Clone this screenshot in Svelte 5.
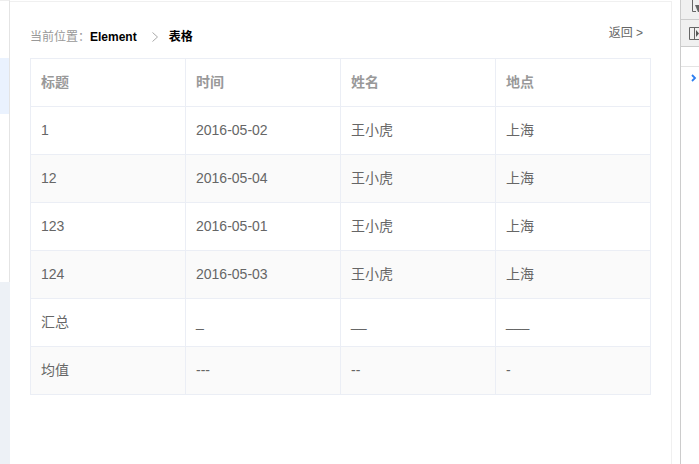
<script>
  const rows = [
    ['1', '2016-05-02', '王小虎', '上海'],
    ['12', '2016-05-04', '王小虎', '上海'],
    ['123', '2016-05-01', '王小虎', '上海'],
    ['124', '2016-05-03', '王小虎', '上海'],
    ['汇总', '_', '__', '___'],
    ['均值', '---', '--', '-']
  ];
</script>

<div class="page">
  <aside class="side">
    <div class="side-top"></div>
    <div class="side-active"></div>
    <div class="side-fill"></div>
    <div class="side-rest"></div>
  </aside>
  <main class="panel">
    <div class="crumbs">
      <div class="trail">
        <span class="label">当前位置：</span>
        <span class="strong">Element</span>
        <svg class="sep" width="8" height="12" viewBox="0 0 8 12"><path d="M1.500 1.500 L6.500 6 L1.500 10.500" fill="none" stroke="#aaa" stroke-width="1"/></svg>
        <span class="strong">表格</span>
      </div>
      <span class="back">返回 &gt;</span>
    </div>
    <table>
      <colgroup><col class="c" /><col class="c" /><col class="c" /><col class="c" /></colgroup>
      <thead>
        <tr><th>标题</th><th>时间</th><th>姓名</th><th>地点</th></tr>
      </thead>
      <tbody>
        {#each rows as row, i}
          <tr class:odd={i % 2 === 1}>
            {#each row as cell}<td>{cell}</td>{/each}
          </tr>
        {/each}
      </tbody>
    </table>
  </main>
  <div class="gutter"></div>
  <aside class="tools">
    <div class="tool t1">
      <svg width="8" height="13" viewBox="0 0 8 13"><path d="M.5 0 V11.500 H4" fill="none" stroke="#666"/><path d="M3 5 H8 V12 H6 Z" fill="#666"/></svg>
    </div>
    <div class="tool t2">
      <svg width="10" height="13" viewBox="0 0 10 13"><path d="M10 .5 H.5 V12.500 H10 M5.500 .5 V12.500" fill="none" stroke="#666"/><path d="M7 3 L10 6.500 L7 10 Z" fill="#555"/></svg>
    </div>
    <div class="tool-blank"></div>
    <div class="tool-chev">
      <svg width="6" height="8" viewBox="0 0 6 8"><path d="M1 1 L4 4 L1 7" fill="none" stroke="#2d7ff0" stroke-width="1.800"/></svg>
    </div>
  </aside>
</div>

<style>
  :global(body) {
    margin: 0;
    background: #fff;
  }
  .page {
    display: flex;
    width: 699px;
    height: 464px;
    overflow: hidden;
    font-family: "Liberation Sans", "Noto Sans CJK SC", sans-serif;
  }
  .side {
    width: 10px;
    flex: none;
    display: flex;
    flex-direction: column;
  }
  .side-top {
    height: 57px;
    border-top: 1px solid #eee;
    border-right: 1px solid #e4e4e4;
  }
  .side-active {
    height: 56px;
    background: #eaf2fe;
    border-right: 1px solid #e4e4e4;
  }
  .side-fill {
    height: 168px;
    border-right: 1px solid #e4e4e4;
  }
  .side-rest {
    flex: 1;
    background: #edf1f6;
  }
  .panel {
    width: 662px;
    flex: none;
    box-sizing: border-box;
    margin-top: 1px;
    border-top: 1px solid #f0f0f0;
    border-right: 1px solid #f0f0f0;
    padding: 0 20px;
  }
  .crumbs {
    height: 56px;
    position: relative;
  }
  .trail {
    display: flex;
    align-items: center;
    padding-top: 28px;
    font-size: 12px;
    line-height: 14px;
  }
  .label {
    color: #999;
    width: 60px;
  }
  .strong {
    color: #000;
    font-weight: 700;
  }
  .sep {
    margin: 0 10px 0 14px;
  }
  .back {
    position: absolute;
    right: 8px;
    top: 24px;
    font-size: 12px;
    line-height: 14px;
    color: #666;
  }
  table {
    border-collapse: collapse;
    table-layout: fixed;
    width: 621px;
    font-size: 14px;
    color: #666;
  }
  .c {
    width: 155px;
  }
  th, td {
    height: 48px;
    box-sizing: border-box;
    padding: 0 10px;
    border: 1px solid #ebeef5;
    text-align: left;
    line-height: 23px;
  }
  th {
    color: #999;
    font-weight: 700;
  }
  .odd td {
    background: #fafafa;
  }
  .gutter {
    width: 8px;
    flex: none;
  }
  .tools {
    flex: 1;
    border-left: 1px solid #ccc;
    display: flex;
    flex-direction: column;
  }
  .tool {
    background: #f0f0f0;
    border-bottom: 1px solid #ccc;
    display: flex;
  }
  .t1 {
    height: 19px;
    padding-left: 11px;
  }
  .t2 {
    height: 26px;
    padding-left: 8px;
    align-items: center;
  }
  .tool-blank {
    height: 19px;
    border-bottom: 1px solid #e4e4e4;
  }
  .tool-chev {
    padding: 7px 0 0 10px;
  }
  svg {
    display: block;
  }
</style>
